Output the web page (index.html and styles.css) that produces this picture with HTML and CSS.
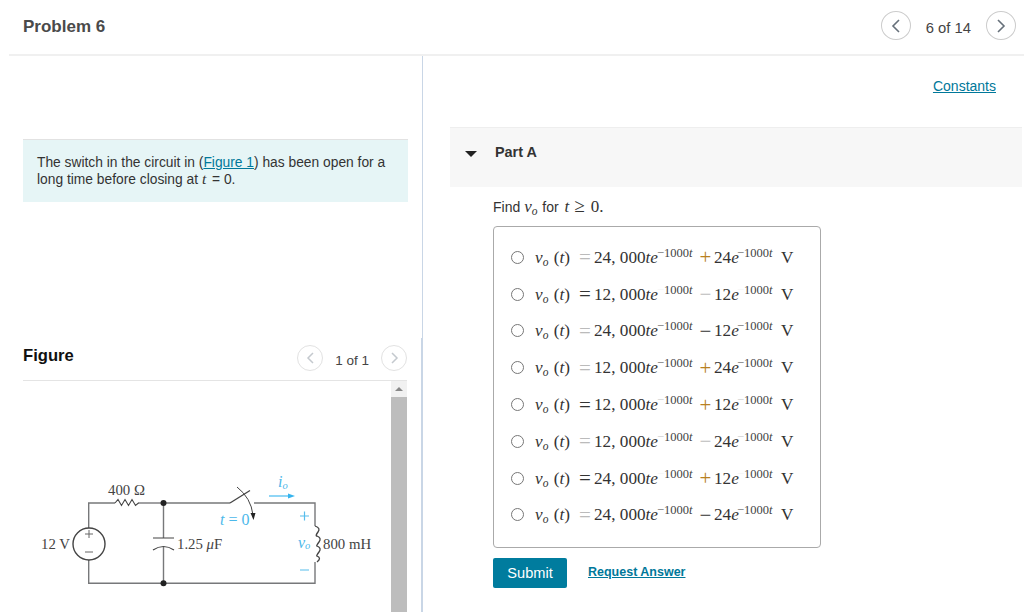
FILE: index.html
```html
<!DOCTYPE html>
<html lang="en">
<head>
<meta charset="utf-8">
<title>Problem 6</title>
<link rel="stylesheet" href="styles.css">
</head>
<body>
<header class="top">
  <h1 class="title">Problem 6</h1>
  <nav class="pager">
    <button class="circle"><svg width="10" height="14" viewBox="0 0 10 14"><path d="M8 1L2 7l6 6" fill="none" stroke="#66707a" stroke-width="1.6"/></svg></button>
    <span class="pager-text">6 of 14</span>
    <button class="circle"><svg width="10" height="14" viewBox="0 0 10 14"><path d="M2 1l6 6-6 6" fill="none" stroke="#66707a" stroke-width="1.6"/></svg></button>
  </nav>
</header>
<main class="main">
  <section class="left">
    <div class="intro">The switch in the circuit in (<a href="#" class="link">Figure 1</a>) has been open for a long time before closing at <i class="ivar">t</i> = 0.</div>
    <div class="fig-head">
      <h2 class="fig-title">Figure</h2>
      <div class="fig-nav">
        <button class="circle small"><svg width="9" height="12" viewBox="0 0 9 12"><path d="M7 1L2 6l5 5" fill="none" stroke="#c4c9ce" stroke-width="1.5"/></svg></button>
        <span class="fig-count">1 of 1</span>
        <button class="circle small"><svg width="9" height="12" viewBox="0 0 9 12"><path d="M2 1l5 5-5 5" fill="none" stroke="#c4c9ce" stroke-width="1.5"/></svg></button>
      </div>
    </div>
    <div class="fig-view">
      <svg class="circuit" width="368" height="231" viewBox="23 381 368 231">
        <g fill="none" stroke="#77787a" stroke-width="1.4">
          <path d="M115 503H88.700V528M88.700 560V583.300H315V562M315 526V503H254M230 503H163.500M163.500 503V538M163.500 547V583.300"/>
          <path d="M163.500 503H138"/>
        </g>
        <path d="M115 503l3-3.500 3.500 6 3.500-6 3.500 6 3.500-6 3.500 6 3-2.500" fill="none" stroke="#444" stroke-width="1.100"/>
        <circle cx="89" cy="544" r="16" fill="none" stroke="#444" stroke-width="1.400"/>
        <path d="M85 534h8M89 530v8M85 552h8" fill="none" stroke="#666" stroke-width="1"/>
        <circle cx="163.500" cy="503" r="3" fill="#222"/>
        <circle cx="163.500" cy="583.300" r="3" fill="#222"/>
        <path d="M153 538h21M153 550q10.500-7 21 0" fill="none" stroke="#444" stroke-width="1.200"/>
        <path d="M230 503l20-12.500" fill="none" stroke="#444" stroke-width="1.300"/>
        <path d="M237 487q14 11 16 28" fill="none" stroke="#444" stroke-width="1"/>
        <path d="M250.500 513h5l-2 7z" fill="#222"/>
        <path d="M315 526q6 2 3 6t-1 4q5 2 2 6t-2 4q5 2 2 6t-2 4q5 2 0 6" fill="none" stroke="#444" stroke-width="1.300"/>
        <path d="M269 496h20" stroke="#35b4ee" stroke-width="1.100"/>
        <path d="M288 493.500l7 2.500-7 2.500z" fill="#35b4ee"/>
        <path d="M300 516h9M304.500 511.500v9M300 570h9" stroke="#57bdec" stroke-width="1.200"/>
        <g class="ckt">
          <text x="108" y="495">400 Ω</text>
          <text x="41" y="548.500">12 V</text>
          <text x="177" y="548.500">1.25 <tspan font-style="italic">μ</tspan>F</text>
          <text x="323" y="548.500">800 mH</text>
        </g>
        <g class="ckt blue">
          <text x="220" y="524.500"><tspan font-style="italic">t</tspan> = 0</text>
          <text x="298" y="547.500" font-style="italic">v<tspan class="sub" dy="1.500">o</tspan></text>
          <text x="278" y="487" font-style="italic">i<tspan class="sub" dy="2">o</tspan></text>
        </g>
      </svg>
      <div class="scrollbar">
        <div class="scroll-up"><span class="scroll-arrow"></span></div>
        <div class="scroll-thumb"></div>
      </div>
    </div>
  </section>
  <section class="right">
    <div class="const-row"><a href="#" class="link">Constants</a></div>
    <div class="part-head">
      <span class="caret"></span>
      <h2 class="part-title">Part A</h2>
    </div>
    <div class="part-body">
      <p class="find">Find <span class="math"><i>v<sub class="msub">o</sub></i></span> for <span class="math tvar"><i>t</i><span class="geq">≥</span>0.</span></p>
      <div class="choices">
        <label class="choice"><input class="radio" type="radio" name="a"><span class="lhs"><i>v<sub class="msub">o</sub></i> (<i>t</i>)</span><span class="eq pale">=</span><span class="c1">24, 000<i>te</i></span><span class="e1"><span class="em">−</span>1000<i>t</i></span><span class="op amber">+</span><span class="c2">24<i>e</i></span><span class="e2"><span class="em">−</span>1000<i>t</i></span><span class="v">V</span></label>
        <label class="choice"><input class="radio" type="radio" name="a"><span class="lhs"><i>v<sub class="msub">o</sub></i> (<i>t</i>)</span><span class="eq">=</span><span class="c1">12, 000<i>te</i></span><span class="e1"><span class="em hide">−</span>1000<i>t</i></span><span class="op pale">−</span><span class="c2">12<i>e</i></span><span class="e2"><span class="em hide">−</span>1000<i>t</i></span><span class="v">V</span></label>
        <label class="choice"><input class="radio" type="radio" name="a"><span class="lhs"><i>v<sub class="msub">o</sub></i> (<i>t</i>)</span><span class="eq pale">=</span><span class="c1">24, 000<i>te</i></span><span class="e1"><span class="em">−</span>1000<i>t</i></span><span class="op">−</span><span class="c2">12<i>e</i></span><span class="e2"><span class="em">−</span>1000<i>t</i></span><span class="v">V</span></label>
        <label class="choice"><input class="radio" type="radio" name="a"><span class="lhs"><i>v<sub class="msub">o</sub></i> (<i>t</i>)</span><span class="eq pale">=</span><span class="c1">12, 000<i>te</i></span><span class="e1"><span class="em">−</span>1000<i>t</i></span><span class="op amber">+</span><span class="c2">24<i>e</i></span><span class="e2"><span class="em">−</span>1000<i>t</i></span><span class="v">V</span></label>
        <label class="choice"><input class="radio" type="radio" name="a"><span class="lhs"><i>v<sub class="msub">o</sub></i> (<i>t</i>)</span><span class="eq">=</span><span class="c1">12, 000<i>te</i></span><span class="e1"><span class="em faint">−</span>1000<i>t</i></span><span class="op amber">+</span><span class="c2">12<i>e</i></span><span class="e2"><span class="em faint">−</span>1000<i>t</i></span><span class="v">V</span></label>
        <label class="choice"><input class="radio" type="radio" name="a"><span class="lhs"><i>v<sub class="msub">o</sub></i> (<i>t</i>)</span><span class="eq pale">=</span><span class="c1">12, 000<i>te</i></span><span class="e1"><span class="em faint">−</span>1000<i>t</i></span><span class="op pale">−</span><span class="c2">24<i>e</i></span><span class="e2"><span class="em faint">−</span>1000<i>t</i></span><span class="v">V</span></label>
        <label class="choice"><input class="radio" type="radio" name="a"><span class="lhs"><i>v<sub class="msub">o</sub></i> (<i>t</i>)</span><span class="eq">=</span><span class="c1">24, 000<i>te</i></span><span class="e1"><span class="em hide">−</span>1000<i>t</i></span><span class="op amber">+</span><span class="c2">12<i>e</i></span><span class="e2"><span class="em hide">−</span>1000<i>t</i></span><span class="v">V</span></label>
        <label class="choice"><input class="radio" type="radio" name="a"><span class="lhs"><i>v<sub class="msub">o</sub></i> (<i>t</i>)</span><span class="eq pale">=</span><span class="c1">24, 000<i>te</i></span><span class="e1"><span class="em">−</span>1000<i>t</i></span><span class="op">−</span><span class="c2">24<i>e</i></span><span class="e2"><span class="em">−</span>1000<i>t</i></span><span class="v">V</span></label>
      </div>
      <div class="actions">
        <button class="submit">Submit</button>
        <a href="#" class="req">Request Answer</a>
      </div>
    </div>
  </section>
</main>
</body>
</html>
```
FILE: styles.css
```css
* { box-sizing: border-box; }
html, body { margin: 0; padding: 0; height: 612px; overflow: hidden; background: #fff; }
body { font-family: "Liberation Sans", Arial, sans-serif; font-size: 14px; color: #333; }
.top { height: 56px; margin-left: 9px; padding: 0 8px 0 14px; display: flex; align-items: center; justify-content: space-between; border-bottom: 2px solid #f0f0f0; }
.title { margin: 0 0 1px; font-size: 17px; font-weight: 700; color: #4a4a4a; }
.pager { display: flex; align-items: center; gap: 15px; margin-bottom: 3px; }
.pager-text { margin-top: 5px; font-size: 14.800px; color: #444; }
.circle { width: 29px; height: 29px; padding: 0; border: 1px solid #ccc; border-radius: 50%; background: #fff; display: flex; align-items: center; justify-content: center; }
.pager .circle { width: 30px; }
.circle.small { width: 26px; height: 26px; border-color: #e2e2e2; }
.main { display: flex; height: 556px; }
.left { position: relative; width: 423px; padding: 83px 14px 0 23px; border-right: 1px solid #c9d6e6; display: flex; flex-direction: column; }
.left::after { content: ""; position: absolute; top: 282px; right: 0; bottom: 0; width: 1px; background: #c9d6e6; }
.intro { height: 63px; padding: 14px 14px 0; line-height: 17px; font-size: 13.800px; color: #333; background: #e6f5f6; border-top: 1px solid #e2e2e2; }
.link { color: #00789a; text-decoration: underline; }
.ivar { font-family: "Liberation Serif", serif; font-size: 15.500px; margin-right: 2px; line-height: 1; }
.fig-head { margin-top: 136px; height: 43px; width: 384px; display: flex; align-items: flex-start; justify-content: space-between; border-bottom: 1px solid #e4e4e4; }
.fig-title { margin: 8px 0 0; font-size: 16.600px; font-weight: 700; color: #111; }
.fig-nav { display: flex; align-items: center; gap: 12px; margin-top: 7px; }
.fig-count { margin-top: 4px; font-size: 13.500px; color: #444; }
.fig-view { flex: 1; width: 384px; display: flex; overflow: hidden; }
.circuit { flex: none; display: block; }
.ckt text { font-family: "Liberation Serif", serif; font-size: 14.800px; fill: #444; }
.ckt.blue text { font-size: 16px; fill: #4cb8ea; }
.ckt .sub { font-size: 10.500px; }
.scrollbar { width: 16px; display: flex; flex-direction: column; }
.scroll-up { height: 16px; background: #f1f1f1; display: flex; align-items: center; justify-content: center; }
.scroll-arrow { width: 0; height: 0; border-left: 4px solid transparent; border-right: 4px solid transparent; border-bottom: 4px solid #888; }
.scroll-thumb { flex: 1; background: #bdbdbd; }
.right { flex: 1; padding-left: 27px; }
.const-row { height: 71px; padding: 22px 28px 0 0; text-align: right; font-size: 14px; line-height: 16px; }
.part-head { width: 572px; height: 60px; display: flex; align-items: flex-start; padding: 16px 0 0 15px; gap: 18px; background: #f7f7f7; border-top: 1px solid #eee; }
.caret { margin-top: 7px; width: 0; height: 0; border-left: 6px solid transparent; border-right: 6px solid transparent; border-top: 6px solid #222; }
.part-title { margin: 0; font-size: 14.400px; line-height: 16px; font-weight: 700; color: #333; }
.part-body { padding-left: 43px; }
.find { margin: 11px 0 0; height: 28px; line-height: 16px; font-size: 14px; color: #333; }
.math, .choices { font-family: "Liberation Serif", "DejaVu Serif", serif; }
.math { font-size: 17px; }
.tvar { margin-left: 2px; }
.geq { margin: 0 6px 0 5px; font-size: 19px; }
.msub { font-size: 11.500px; vertical-align: -3px; line-height: 0; margin-right: 1px; }
.choices { width: 328px; height: 322px; padding-top: 12px; border: 1px solid #aaa; border-radius: 4px; font-size: 17.200px; color: #333; }
.choice { height: 36.800px; display: grid; grid-template-columns: 24px 42px 17px 64px 40px 16px 24px 43px 14px; align-items: center; padding-left: 17px; white-space: nowrap; }
.lhs, .c1, .c2, .v { padding-top: 1px; }
.eq, .op { font-size: 21px; line-height: 20px; text-align: center; text-indent: -1px; }
.radio { appearance: none; margin: 0; width: 13px; height: 13px; border: 1.500px solid #777; border-radius: 50%; background: #fff; }
.pale { color: #bbb; }
.amber { color: #b8801f; }
.e1, .e2 { font-size: 12.500px; position: relative; top: -4px; left: -1px; color: #444; }
.em { color: #666; }
.em.faint { color: #ccc; }
.em.hide { color: #f4f4f4; }
.actions { margin-top: 10px; display: flex; align-items: center; gap: 21px; }
.submit { width: 74px; height: 30px; padding: 0; border: 0; border-radius: 2px; background: #007c9e; color: #fff; font: 14.600px "Liberation Sans", Arial, sans-serif; }
.req { margin-top: -2px; font-size: 12.500px; font-weight: 700; color: #00789a; text-decoration: underline; }
```
